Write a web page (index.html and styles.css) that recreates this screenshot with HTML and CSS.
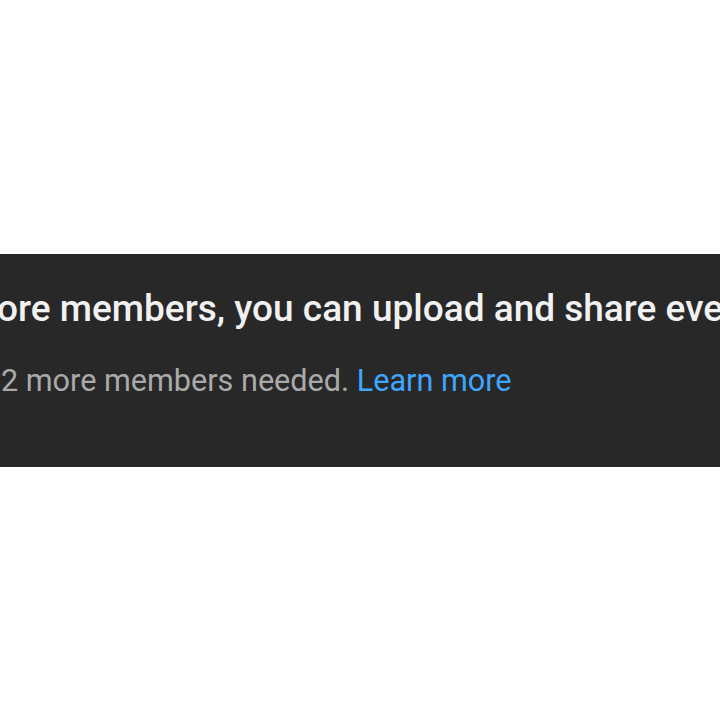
FILE: index.html
```html
<!DOCTYPE html>
<html>
<head>
<meta charset="utf-8">
<link rel="stylesheet" href="styles.css">
</head>
<body>
<div class="page">
  <div class="banner">
    <div class="title">ore members, you can upload and share every video</div>
    <div class="sub"><span class="muted">2 more members needed.</span> <a class="link" href="#">Learn more</a></div>
  </div>
</div>
</body>
</html>
```

FILE: styles.css
```css
html, body {
  margin: 0;
  padding: 0;
  background: #ffffff;
}
.page {
  width: 720px;
  height: 720px;
  padding-top: 254px;
  box-sizing: border-box;
  overflow: hidden;
}
.banner {
  background: #282828;
  height: 213px;
  box-sizing: border-box;
  padding-top: 33px;
  overflow: hidden;
  font-family: Roboto, "Liberation Sans", sans-serif;
  white-space: nowrap;
}
.title {
  color: #f1f1f1;
  font-size: 37px;
  font-weight: 500;
  line-height: 44px;
  margin-left: -3px;
}
.sub {
  margin-top: 30px;
  font-size: 30.6px;
  line-height: 40px;
  margin-left: 1px;
}
.muted {
  color: #aaaaaa;
}
.link {
  color: #3ea6ff;
  text-decoration: none;
}
```
